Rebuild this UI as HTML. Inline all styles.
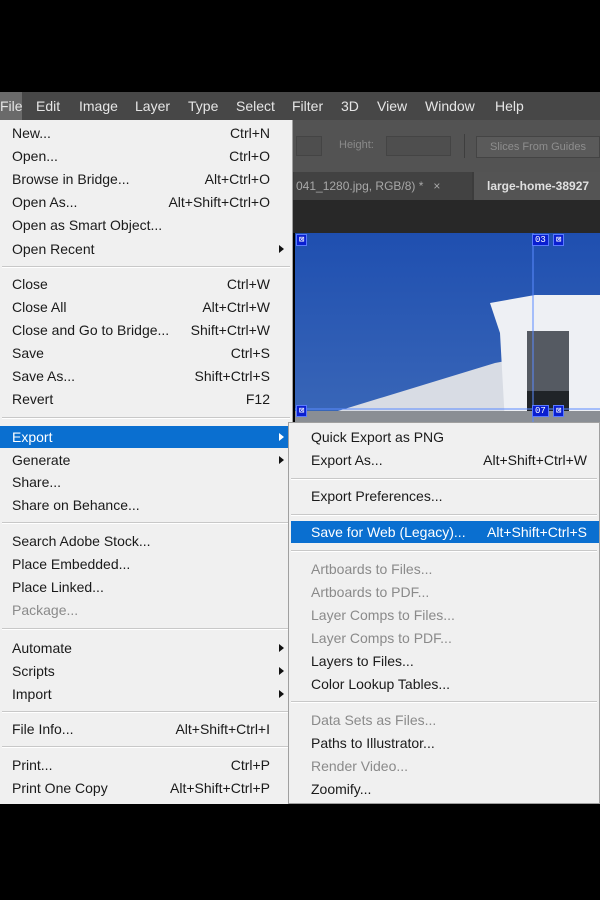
<!DOCTYPE html>
<html><head><meta charset="utf-8"><style>
*{margin:0;padding:0;box-sizing:border-box}
body{width:600px;height:900px;background:#000;position:relative;overflow:hidden;font-family:"Liberation Sans",sans-serif;font-size:14px;color:#1a1a1a}
.abs{position:absolute}
.it{position:absolute;left:0;right:0;height:22px;line-height:22px;white-space:nowrap}
.it .l{position:absolute;left:12px}
.it .r{position:absolute;right:22px}
.it .a{position:absolute;right:8px;top:7px;width:0;height:0;border-left:5px solid #111;border-top:4px solid transparent;border-bottom:4px solid transparent}
.sep{position:absolute;left:2px;right:2px;height:2px;border-top:1px solid #c8c8c8;border-bottom:1px solid #fff}
.hl{background:#0a6fd0;color:#fff}
.hl .a{border-left-color:#fff}
.g{color:#8a8a8a}
.sub .it .l{left:22px}
.sub .it .r{right:12px}
.mb span{position:absolute;top:0;line-height:28px;color:#e6e6e6;font-size:14px}
.tag{position:absolute;background:#0a1fd0;color:#fff;font-family:"Liberation Mono",monospace;font-size:9px;line-height:11px;height:12px;padding:0 2px;border:1px solid #5a7aff}
</style></head><body>
<!-- menu bar -->
<div class="abs mb" style="left:0;top:92px;width:600px;height:28px;background:#474747">
<div class="abs" style="left:0;top:0;width:22px;height:28px;background:#6a6a6a"></div>
<span style="left:0">File</span><span style="left:36px">Edit</span><span style="left:79px">Image</span><span style="left:135px">Layer</span><span style="left:188px">Type</span><span style="left:236px">Select</span><span style="left:292px">Filter</span><span style="left:341px">3D</span><span style="left:377px">View</span><span style="left:425px">Window</span><span style="left:495px">Help</span>
</div>
<!-- options bar -->
<div class="abs" style="left:0;top:120px;width:600px;height:52px;background:#535353"></div>
<div class="abs" style="left:296px;top:136px;width:26px;height:20px;border:1px solid #444;background:#4e4e4e"></div>
<div class="abs" style="left:339px;top:139px;color:#8a8a8a;font-size:11px">Height:</div>
<div class="abs" style="left:386px;top:136px;width:65px;height:20px;border:1px solid #444;background:#4e4e4e"></div>
<div class="abs" style="left:464px;top:134px;width:1px;height:24px;background:#3e3e3e"></div>
<div class="abs" style="left:476px;top:136px;width:124px;height:22px;border:1px solid #444;background:#5a5a5a;color:#8e8e8e;font-size:11px;line-height:20px;padding-left:13px">Slices From Guides</div>
<!-- tabs -->
<div class="abs" style="left:0;top:172px;width:600px;height:28px;background:#3c3c3c"></div>
<div class="abs" style="left:294px;top:172px;width:178px;height:28px;background:#424242;color:#a8a8a8;font-size:12px;line-height:28px;padding-left:2px">041_1280.jpg, RGB/8) * &nbsp;&nbsp;×</div>
<div class="abs" style="left:474px;top:172px;width:126px;height:28px;background:#545454;color:#e0e0e0;font-size:12px;font-weight:bold;line-height:28px;padding-left:13px">large-home-38927</div>
<div class="abs" style="left:0;top:200px;width:600px;height:33px;background:#282828"></div>
<!-- canvas -->
<div class="abs" style="left:295px;top:233px;width:305px;height:190px;background:linear-gradient(180deg,#1f4fb0,#3a67b8);overflow:hidden">
<svg width="305" height="190" style="position:absolute;left:0;top:0">
<polygon points="20,185 200,130 305,110 305,190 20,190" fill="#d8dce4"/>
<polygon points="195,70 240,62 305,62 305,190 210,190 205,100" fill="#eef0f4"/>
<rect x="232" y="98" width="42" height="60" fill="#555a62"/>
<rect x="232" y="158" width="42" height="30" fill="#202428"/>
<rect x="0" y="178" width="305" height="12" fill="#8a8e94"/>
<line x1="238" y1="0" x2="238" y2="190" stroke="#5a8aff" stroke-width="1"/>
<line x1="0" y1="176" x2="305" y2="176" stroke="#5a8aff" stroke-width="1"/>
</svg>
<div class="tag" style="left:1px;top:1px">⊠</div>
<div class="tag" style="left:237px;top:1px">03</div><div class="tag" style="left:258px;top:1px">⊠</div>
<div class="tag" style="left:1px;top:172px">⊠</div>
<div class="tag" style="left:237px;top:172px">07</div><div class="tag" style="left:258px;top:172px">⊠</div>
</div>
<!-- File menu -->
<div class="abs" style="left:0;top:120px;width:293px;height:684px;background:#f0f0f0;border-right:1px solid #a0a0a0">
<div class="it" style="top:2px"><span class="l">New...</span><span class="r">Ctrl+N</span></div>
<div class="it" style="top:25px"><span class="l">Open...</span><span class="r">Ctrl+O</span></div>
<div class="it" style="top:48px"><span class="l">Browse in Bridge...</span><span class="r">Alt+Ctrl+O</span></div>
<div class="it" style="top:71px"><span class="l">Open As...</span><span class="r">Alt+Shift+Ctrl+O</span></div>
<div class="it" style="top:94px"><span class="l">Open as Smart Object...</span></div>
<div class="it" style="top:118px"><span class="l">Open Recent</span><span class="a"></span></div>
<div class="sep" style="top:146px"></div>
<div class="it" style="top:153px"><span class="l">Close</span><span class="r">Ctrl+W</span></div>
<div class="it" style="top:176px"><span class="l">Close All</span><span class="r">Alt+Ctrl+W</span></div>
<div class="it" style="top:199px"><span class="l">Close and Go to Bridge...</span><span class="r">Shift+Ctrl+W</span></div>
<div class="it" style="top:222px"><span class="l">Save</span><span class="r">Ctrl+S</span></div>
<div class="it" style="top:245px"><span class="l">Save As...</span><span class="r">Shift+Ctrl+S</span></div>
<div class="it" style="top:268px"><span class="l">Revert</span><span class="r">F12</span></div>
<div class="sep" style="top:297px"></div>
<div class="it hl" style="top:306px"><span class="l">Export</span><span class="a"></span></div>
<div class="it" style="top:329px"><span class="l">Generate</span><span class="a"></span></div>
<div class="it" style="top:351px"><span class="l">Share...</span></div>
<div class="it" style="top:374px"><span class="l">Share on Behance...</span></div>
<div class="sep" style="top:402px"></div>
<div class="it" style="top:410px"><span class="l">Search Adobe Stock...</span></div>
<div class="it" style="top:433px"><span class="l">Place Embedded...</span></div>
<div class="it" style="top:456px"><span class="l">Place Linked...</span></div>
<div class="it g" style="top:479px"><span class="l">Package...</span></div>
<div class="sep" style="top:508px"></div>
<div class="it" style="top:517px"><span class="l">Automate</span><span class="a"></span></div>
<div class="it" style="top:540px"><span class="l">Scripts</span><span class="a"></span></div>
<div class="it" style="top:563px"><span class="l">Import</span><span class="a"></span></div>
<div class="sep" style="top:591px"></div>
<div class="it" style="top:598px"><span class="l">File Info...</span><span class="r">Alt+Shift+Ctrl+I</span></div>
<div class="sep" style="top:626px"></div>
<div class="it" style="top:634px"><span class="l">Print...</span><span class="r">Ctrl+P</span></div>
<div class="it" style="top:657px"><span class="l">Print One Copy</span><span class="r">Alt+Shift+Ctrl+P</span></div>
</div>
<!-- Export submenu -->
<div class="abs sub" style="left:288px;top:422px;width:312px;height:382px;background:#f0f0f0;border:1px solid #a0a0a0">
<div class="it" style="top:3px"><span class="l">Quick Export as PNG</span></div>
<div class="it" style="top:26px"><span class="l">Export As...</span><span class="r">Alt+Shift+Ctrl+W</span></div>
<div class="sep" style="top:55px"></div>
<div class="it" style="top:62px"><span class="l">Export Preferences...</span></div>
<div class="sep" style="top:91px"></div>
<div class="it hl" style="top:98px;left:2px"><span class="l" style="left:20px">Save for Web (Legacy)...</span><span class="r">Alt+Shift+Ctrl+S</span></div>
<div class="sep" style="top:127px"></div>
<div class="it g" style="top:135px"><span class="l">Artboards to Files...</span></div>
<div class="it g" style="top:158px"><span class="l">Artboards to PDF...</span></div>
<div class="it g" style="top:181px"><span class="l">Layer Comps to Files...</span></div>
<div class="it g" style="top:204px"><span class="l">Layer Comps to PDF...</span></div>
<div class="it" style="top:227px"><span class="l">Layers to Files...</span></div>
<div class="it" style="top:250px"><span class="l">Color Lookup Tables...</span></div>
<div class="sep" style="top:278px"></div>
<div class="it g" style="top:286px"><span class="l">Data Sets as Files...</span></div>
<div class="it" style="top:309px"><span class="l">Paths to Illustrator...</span></div>
<div class="it g" style="top:332px"><span class="l">Render Video...</span></div>
<div class="it" style="top:355px"><span class="l">Zoomify...</span></div>
</div>
</body></html>
